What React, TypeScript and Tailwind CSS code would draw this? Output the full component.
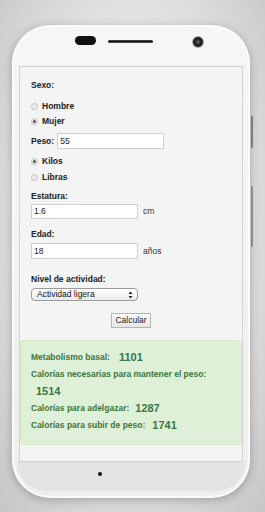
import React from "react";

const font = { fontFamily: '"Liberation Sans", Arial, sans-serif' };

function Radio({ checked, label }: { checked?: boolean; label: string }) {
  return (
    <div className="flex h-[12px] items-center">
      <span className="flex h-[7px] w-[7px] items-center justify-center rounded-full border border-[#c4c4c4] bg-[#ececec]">
        {checked && <span className="h-[3px] w-[3px] rounded-full bg-[#555]" />}
      </span>
      <span className="ml-[4px] text-[8.5px] font-bold text-[#222]">{label}</span>
    </div>
  );
}

export default function App() {
  return (
    <div
      className="relative h-[512px] w-[265px] overflow-hidden bg-[radial-gradient(ellipse_at_50%_45%,#eeeeee_0%,#e2e2e2_55%,#c6c6c6_100%)]"
      style={font}
    >
      <div className="pt-[25px] pl-[12px]">
        {/* phone body */}
        <div className="relative h-[473px] w-[238px] rounded-[38px] bg-[#fbfbfb] p-[2px] shadow-[0_2px_10px_rgba(0,0,0,0.25)]">
          <span className="absolute right-[-3px] top-[91px] h-[32px] w-[2px] rounded bg-[#7a7a7a]" />
          <span className="absolute right-[-3px] top-[161px] h-[61px] w-[2px] rounded bg-[#8a8a8a]" />
          <div className="flex h-full flex-col overflow-hidden rounded-[36px] bg-[linear-gradient(#f6f6f6,#eeeeee)]">
            {/* top bezel */}
            <div className="flex h-[39px] items-start">
              <span className="ml-[61px] mt-[9px] h-[9px] w-[21px] rounded-full bg-[#111]" />
              <span className="ml-[12px] mt-[13px] h-[3px] w-[45px] rounded-full bg-[linear-gradient(#555,#111,#666)]" />
              <span className="ml-[40px] mt-[10px] flex h-[10px] w-[10px] items-center justify-center rounded-full bg-[#222] ring-1 ring-[#aaa]">
                <span className="h-[4px] w-[4px] rounded-full bg-[#555]" />
              </span>
            </div>

            {/* screen */}
            <div className="mx-[5px] h-[396px] border border-[#d2d2d2] bg-[#f4f4f4]">
              <div className="flex flex-col pl-[11px]">
                <div className="mt-[12px] flex h-[12px] items-center text-[8.5px] font-bold text-[#222]">Sexo:</div>
                <div className="mt-[9px]"><Radio label="Hombre" /></div>
                <div className="mt-[3px]"><Radio checked label="Mujer" /></div>
                <div className="mt-[6px] flex h-[16px] items-center">
                  <span className="text-[8.5px] font-bold text-[#222]">Peso:</span>
                  <div className="ml-[3px] flex h-[16px] w-[107px] items-center border border-[#cfcfcf] bg-white pl-[2px] text-[8.5px] text-[#222]">55</div>
                </div>
                <div className="mt-[6px]"><Radio checked label="Kilos" /></div>
                <div className="mt-[4px]"><Radio label="Libras" /></div>
                <div className="mt-[7px] flex h-[12px] items-center text-[8.5px] font-bold text-[#222]">Estatura:</div>
                <div className="mt-[2px] flex h-[15px] items-center">
                  <div className="flex h-[15px] w-[107px] items-center border border-[#cfcfcf] bg-white pl-[2px] text-[8.5px] text-[#222]">1.6</div>
                  <span className="ml-[5px] text-[8.5px] text-[#333]">cm</span>
                </div>
                <div className="mt-[9px] flex h-[12px] items-center text-[8.5px] font-bold text-[#222]">Edad:</div>
                <div className="mt-[3px] flex h-[16px] items-center">
                  <div className="flex h-[16px] w-[107px] items-center border border-[#cfcfcf] bg-white pl-[2px] text-[8.5px] text-[#222]">18</div>
                  <span className="ml-[5px] text-[8.5px] text-[#333]">años</span>
                </div>
                <div className="mt-[14px] flex h-[12px] items-center text-[8.5px] font-bold text-[#222]">Nivel de actividad:</div>
                <div className="mt-[3px] flex h-[13px] w-[107px] items-center justify-between rounded-[4px] border border-[#9a9a9a] bg-[linear-gradient(#ffffff,#ececec)] pl-[5px] pr-[4px]">
                  <span className="text-[8.5px] text-[#111]">Actividad ligera</span>
                  <svg width="5" height="8" viewBox="0 0 5 8">
                    <path d="M2.5 0.5 L4.5 3 H0.5 Z" fill="#222" />
                    <path d="M2.5 7.5 L4.5 5 H0.5 Z" fill="#222" />
                  </svg>
                </div>
              </div>
              <div className="mt-[12px] flex justify-center">
                <div className="flex h-[15px] w-[40px] items-center justify-center border border-[#b4b4b4] bg-[linear-gradient(#fafafa,#e6e6e6)] text-[8.5px] text-[#222]">
                  Calcular
                </div>
              </div>

              {/* results */}
              <div className="mt-[12px] h-[105px] rounded-[3px] border border-[#d6e9c6] bg-[#dff0d8] pl-[10px] pt-[8px] font-bold text-[#3c763d]">
                <div className="flex h-[17px] items-center">
                  <span className="text-[8.5px]">Metabolismo basal:</span>
                  <span className="ml-[9px] text-[11px]">1101</span>
                </div>
                <div className="flex h-[17px] items-center text-[8.5px]">Calorías necesarias para mantener el peso:</div>
                <div className="flex h-[17px] items-center pl-[5px] text-[11px]">1514</div>
                <div className="flex h-[17px] items-center">
                  <span className="text-[8.5px]">Calorías para adelgazar:</span>
                  <span className="ml-[6px] text-[11px]">1287</span>
                </div>
                <div className="flex h-[17px] items-center">
                  <span className="text-[8.5px]">Calorías para subir de peso:</span>
                  <span className="ml-[7px] text-[11px]">1741</span>
                </div>
              </div>
            </div>

            {/* bottom bezel */}
            <div className="flex flex-1 justify-center rounded-b-[34px] bg-[#e3e3e3] mb-[5px] mx-[3px]">
              <span className="mt-[10px] mr-[62px] h-[4px] w-[4px] rounded-full bg-[#111]" />
            </div>
          </div>
        </div>
      </div>
    </div>
  );
}
